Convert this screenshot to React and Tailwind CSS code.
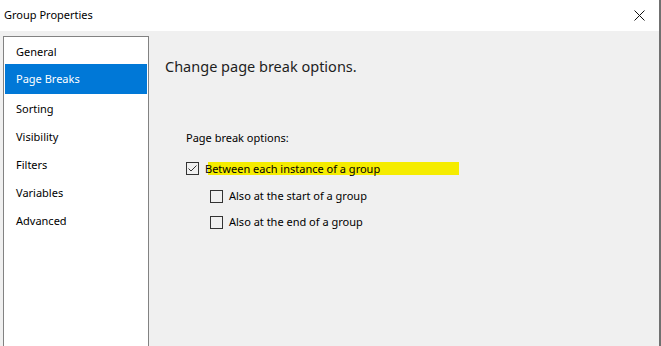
import React from 'react';

const navItems = ['General', 'Page Breaks', 'Sorting', 'Visibility', 'Filters', 'Variables', 'Advanced'];

const Checkbox = ({ checked }) => (
  <span className="w-[13px] h-[13px] border border-[#333333] bg-transparent flex items-center justify-center shrink-0">
    {checked && (
      <svg width="11" height="11" viewBox="0 0 11 11">
        <path d="M1.5 5.5 L4 8 L9.5 2.5" fill="none" stroke="#333333" strokeWidth="1" />
      </svg>
    )}
  </span>
);

export default function App() {
  return (
    <div
      className="w-[661px] h-[346px] flex flex-col overflow-hidden border-r-2 border-[#707070] text-[11px] text-black"
      style={{ fontFamily: '"Noto Sans", "Open Sans", sans-serif' }}
    >
      {/* Title bar */}
      <div className="h-[31px] bg-white flex items-center justify-between pl-[4px] pr-[14px] shrink-0">
        <span className="text-[11px]">Group Properties</span>
        <svg width="11" height="11" viewBox="0 0 11 11">
          <path d="M0.5 0.5 L10.5 10.5 M10.5 0.5 L0.5 10.5" stroke="#111" strokeWidth="1" />
        </svg>
      </div>

      {/* Body */}
      <div className="flex-1 bg-[#f0f0f0] flex pl-[3px] pt-[5px] min-h-0">
        <div className="w-[146px] bg-white border border-b-0 border-[#828282] flex flex-col">
          {navItems.map((item, i) =>
            item === 'Page Breaks' ? (
              <div key={item} className="h-[30px] mx-[1px] bg-[#0078d7] text-white flex items-center pl-[11px] pt-[1px]">
                {item}
              </div>
            ) : (
              <div key={item} className={`${i === 0 ? 'h-[27px] pt-[4px]' : 'h-[28px] pt-[2px]'} flex items-center pl-[12px]`}>
                {item}
              </div>
            )
          )}
        </div>

        <div className="flex-1 pl-[16px] pt-[20px]">
          <div className="text-[14.5px] text-[#1e1e1e] leading-[20px]">Change page break options.</div>
          <div className="pl-[21px] pt-[54px] flex flex-col">
            <div className="leading-[16px]">Page break options:</div>
            <div className="flex items-center mt-[14px] h-[16px]">
              <Checkbox checked />
              <span className="ml-[6px] w-[254px] leading-[13px] bg-[linear-gradient(to_right,transparent_3px,#f5ec00_3px)]">
                Between each instance of a group
              </span>
            </div>
            <div className="flex flex-col pl-[24px] gap-[10px] mt-[12px]">
              <div className="flex items-center h-[16px]">
                <Checkbox />
                <span className="ml-[6px]">Also at the start of a group</span>
              </div>
              <div className="flex items-center h-[16px]">
                <Checkbox />
                <span className="ml-[6px]">Also at the end of a group</span>
              </div>
            </div>
          </div>
        </div>
      </div>
    </div>
  );
}
